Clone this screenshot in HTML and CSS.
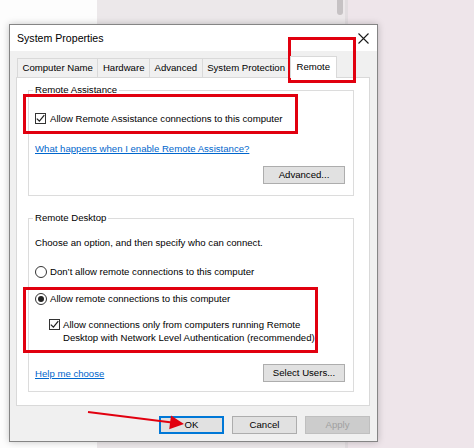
FILE: index.html
```html
<!DOCTYPE html>
<html lang="en">
<head>
<meta charset="utf-8">
<title>System Properties</title>
<link rel="stylesheet" href="styles.css">
</head>
<body>
<div class="desktop">
  <div class="col-white"></div>
  <div class="col-mid"><div class="thumb"></div></div>
  <div class="divider"></div>
  <div class="col-right"></div>
</div>

<div class="dialog">
  <div class="titlebar">
    <span class="title">System Properties</span>
    <svg class="close" width="11" height="11" viewBox="0 0 11 11"><path d="M0.5 0.5 L10.5 10.5 M10.5 0.5 L0.5 10.5" stroke="#1a1a1a" stroke-width="1.1" fill="none"/></svg>
  </div>
  <div class="body">
    <div class="tabs">
      <div class="tab">Computer Name</div>
      <div class="tab">Hardware</div>
      <div class="tab">Advanced</div>
      <div class="tab">System Protection</div>
      <div class="tab tab-active">Remote</div>
    </div>
    <div class="panel">
      <fieldset class="group group-ra">
        <legend>Remote Assistance</legend>
        <div class="row check-row">
          <span class="cbox"><svg width="9" height="9" viewBox="0 0 9 9"><path d="M0.8 4.6 L3.4 7.2 L8.3 1.2" stroke="#222" stroke-width="1.2" fill="none"/></svg></span>
          <span>Allow Remote Assistance connections to this computer</span>
        </div>
        <div class="link link-ra">What happens when I enable Remote Assistance?</div>
        <div class="btn-row">
          <div class="btn">Advanced...</div>
        </div>
      </fieldset>

      <fieldset class="group group-rd">
        <legend>Remote Desktop</legend>
        <div class="text choose">Choose an option, and then specify who can connect.</div>
        <div class="row radio-row r1">
          <span class="radio"></span>
          <span>Don’t allow remote connections to this computer</span>
        </div>
        <div class="row radio-row r2">
          <span class="radio radio-on"><span class="dot"></span></span>
          <span>Allow remote connections to this computer</span>
        </div>
        <div class="row nla-row">
          <span class="cbox"><svg width="9" height="9" viewBox="0 0 9 9"><path d="M0.8 4.6 L3.4 7.2 L8.3 1.2" stroke="#222" stroke-width="1.2" fill="none"/></svg></span>
          <span>Allow connections only from computers running Remote<br>Desktop with Network Level Authentication (recommended)</span>
        </div>
        <div class="help-row">
          <span class="link">Help me choose</span>
          <div class="btn">Select Users...</div>
        </div>
      </fieldset>
    </div>
    <div class="footer">
      <div class="btn fbtn btn-default">OK</div>
      <div class="btn fbtn">Cancel</div>
      <div class="btn fbtn btn-disabled">Apply</div>
    </div>
  </div>
</div>

<div class="mark mark-tab"></div>
<div class="mark mark-ra"></div>
<div class="mark mark-rd"></div>
<svg class="arrow" width="110" height="35" viewBox="0 0 110 35">
  <line x1="8" y1="7" x2="92" y2="17.6" stroke="#e1000f" stroke-width="2"/>
  <polygon points="104,19 91,10.4 89.2,24.2" fill="#e1000f"/>
</svg>
</body>
</html>
```

FILE: styles.css
```css
* { box-sizing: border-box; }

html, body {
  margin: 0;
  padding: 0;
}

body {
  width: 474px;
  height: 448px;
  overflow: hidden;
  position: relative;
  font-family: "Liberation Sans", Arial, sans-serif;
  font-size: 9.6px;
  color: #000;
}

.desktop {
  display: flex;
  height: 448px;
}
.col-white { width: 97px; background: #fdfdfd; }
.col-mid {
  width: 248px;
  background: #ece8ea;
  display: flex;
  justify-content: flex-end;
  align-items: flex-start;
}
.thumb {
  width: 6px;
  height: 15px;
  margin-right: 2px;
  background: #c6c2c4;
  border-radius: 0 0 3px 3px;
}
.divider { width: 3px; background: #e2dde0; }
.col-right { flex: 1; background: #eee5ea; }

.dialog {
  position: absolute;
  left: 9px;
  top: 24px;
  width: 369px;
  height: 418px;
  border: 1px solid #858585;
  background: #f0f0f0;
  box-shadow: 0 0 7px rgba(0,0,0,0.22);
  display: flex;
  flex-direction: column;
}

.titlebar {
  height: 26px;
  background: #fff;
  display: flex;
  align-items: center;
  justify-content: space-between;
  padding: 0 8px 0 7px;
}
.title { font-size: 10.6px; }
.close { display: block; margin-top: 1px; }

.body {
  flex: 1;
  display: flex;
  flex-direction: column;
  padding: 5px 7px 7px 6px;
}

.tabs {
  display: flex;
  align-items: flex-end;
  height: 21px;
  padding-left: 1px;
}
.tab {
  height: 19px;
  line-height: 18px;
  padding: 0 4.5px;
  border: 1px solid #d9d9d9;
  border-bottom: none;
  margin-left: -1px;
  background: #f0f0f0;
  white-space: nowrap;
}
.tab:first-child { margin-left: 0; }
.tab-active {
  height: 22px;
  line-height: 19px;
  padding: 0 6px;
  background: #fff;
  margin-bottom: -1px;
  position: relative;
  z-index: 1;
}

.panel {
  flex: 1;
  background: #fff;
  border: 1px solid #d9d9d9;
  padding: 6px 15px 13px 11px;
}

.group {
  margin: 0;
  border: 1px solid #dcdcdc;
  padding: 0 8px 11px 6px;
  min-width: 0;
}
.group legend {
  padding: 0 2px;
  margin-left: -2px;
  line-height: 12px;
  font-size: 9.6px;
}
.group-rd {
  margin-top: 16px;
  padding-bottom: 9px;
}

.row {
  display: flex;
  align-items: center;
  line-height: 13px;
  white-space: nowrap;
}
.check-row { margin-top: 16px; }

.cbox {
  width: 11px;
  height: 11px;
  border: 1px solid #333;
  margin-right: 4px;
  display: flex;
  align-items: center;
  justify-content: center;
  flex: none;
  background: #fff;
}
.cbox svg { display: block; }

.link {
  color: #0066cc;
  text-decoration: underline;
  line-height: 13px;
}
.link-ra { margin-top: 17px; }

.btn-row {
  display: flex;
  justify-content: flex-end;
  margin-top: 11px;
}
.btn {
  width: 82px;
  height: 18px;
  line-height: 16px;
  text-align: center;
  background: #e1e1e1;
  border: 1px solid #adadad;
}

.text { line-height: 13px; }
.choose { margin-top: 12px; }
.r1 { margin-top: 16px; }
.r2 { margin-top: 14px; }
.radio {
  width: 12px;
  height: 12px;
  border: 1px solid #333;
  border-radius: 50%;
  margin-right: 3px;
  flex: none;
  display: flex;
  align-items: center;
  justify-content: center;
  background: #fff;
}
.dot {
  width: 6px;
  height: 6px;
  border-radius: 50%;
  background: #222;
}

.nla-row {
  margin-top: 13px;
  padding-left: 14px;
  align-items: flex-start;
}
.nla-row .cbox { margin-top: 1px; margin-right: 3px; }

.help-row {
  margin-top: 20px;
  display: flex;
  justify-content: space-between;
  align-items: center;
}

.footer {
  margin-top: 10px;
  display: flex;
  justify-content: flex-end;
  gap: 8px;
}
.fbtn { width: 65px; }
.btn-default {
  border-color: #0078d7;
  box-shadow: inset 0 0 0 1px #0078d7;
}
.btn-disabled {
  background: #cccccc;
  border-color: #bfbfbf;
  color: #a0a0a0;
}

.mark {
  position: absolute;
  border: 3px solid #e1000f;
}
.mark-tab { left: 288px; top: 37px; width: 68px; height: 46px; }
.mark-ra { left: 23px; top: 94px; width: 275px; height: 40px; }
.mark-rd { left: 23px; top: 287px; width: 295px; height: 66px; }

.arrow {
  position: absolute;
  left: 80px;
  top: 405px;
}
```
